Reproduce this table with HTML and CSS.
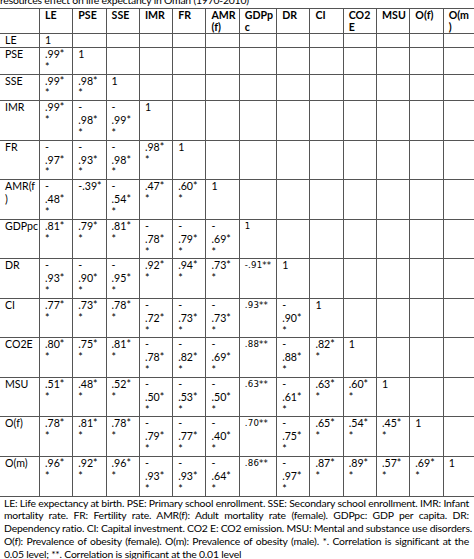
FILE: index.html
```html
<!DOCTYPE html>
<html>
<head>
<meta charset="utf-8">
<link rel="stylesheet" href="styles.css">
</head>
<body>
<div class="page">
  <div class="title">resources effect on life expectancy in Oman (1970-2010)</div>
  <table class="corr">
    <colgroup>
      <col class="c-lab"><col class="c-n"><col class="c-n"><col class="c-n"><col class="c-n"><col class="c-n"><col class="c-n"><col class="c-g"><col class="c-n"><col class="c-n"><col class="c-n"><col class="c-n"><col class="c-n"><col class="c-n">
    </colgroup>
    <tr class="head">
      <th></th><th>LE</th><th>PSE</th><th>SSE</th><th>IMR</th><th>FR</th><th>AMR<br>(f)</th><th>GDPp<br>c</th><th>DR</th><th>CI</th><th>CO2<br>E</th><th>MSU</th><th>O(f)</th><th>O(m<br>)</th>
    </tr>
    <tr><td>LE</td><td>1</td><td></td><td></td><td></td><td></td><td></td><td></td><td></td><td></td><td></td><td></td><td></td><td></td></tr>
    <tr><td>PSE</td><td>.99*<br>*</td><td>1</td><td></td><td></td><td></td><td></td><td></td><td></td><td></td><td></td><td></td><td></td><td></td></tr>
    <tr><td>SSE</td><td>.99*<br>*</td><td>.98*<br>*</td><td>1</td><td></td><td></td><td></td><td></td><td></td><td></td><td></td><td></td><td></td><td></td></tr>
    <tr><td>IMR</td><td>.99*<br>*</td><td>-<br>.98*<br>*</td><td>-<br>.99*<br>*</td><td>1</td><td></td><td></td><td></td><td></td><td></td><td></td><td></td><td></td><td></td></tr>
    <tr><td>FR</td><td>-<br>.97*<br>*</td><td>-<br>.93*<br>*</td><td>-<br>.98*<br>*</td><td>.98*<br>*</td><td>1</td><td></td><td></td><td></td><td></td><td></td><td></td><td></td><td></td></tr>
    <tr><td>AMR(f<br>)</td><td>-<br>.48*<br>*</td><td>-.39*</td><td>-<br>.54*<br>*</td><td>.47*<br>*</td><td>.60*<br>*</td><td>1</td><td></td><td></td><td></td><td></td><td></td><td></td><td></td></tr>
    <tr><td>GDPpc</td><td>.81*<br>*</td><td>.79*<br>*</td><td>.81*<br>*</td><td>-<br>.78*<br>*</td><td>-<br>.79*<br>*</td><td>-<br>.69*<br>*</td><td class="v">1</td><td></td><td></td><td></td><td></td><td></td><td></td></tr>
    <tr><td>DR</td><td>-<br>.93*<br>*</td><td>-<br>.90*<br>*</td><td>-<br>.95*<br>*</td><td>.92*<br>*</td><td>.94*<br>*</td><td>.73*<br>*</td><td class="v">-.91**</td><td>1</td><td></td><td></td><td></td><td></td><td></td></tr>
    <tr><td>CI</td><td>.77*<br>*</td><td>.73*<br>*</td><td>.78*<br>*</td><td>-<br>.72*<br>*</td><td>-<br>.73*<br>*</td><td>-<br>.73*<br>*</td><td class="v">.93**</td><td>-<br>.90*<br>*</td><td>1</td><td></td><td></td><td></td><td></td></tr>
    <tr><td>CO2E</td><td>.80*<br>*</td><td>.75*<br>*</td><td>.81*<br>*</td><td>-<br>.78*<br>*</td><td>-<br>.82*<br>*</td><td>-<br>.69*<br>*</td><td class="v">.88**</td><td>-<br>.88*<br>*</td><td>.82*<br>*</td><td>1</td><td></td><td></td><td></td></tr>
    <tr><td>MSU</td><td>.51*<br>*</td><td>.48*<br>*</td><td>.52*<br>*</td><td>-<br>.50*<br>*</td><td>-<br>.53*<br>*</td><td>-<br>.50*<br>*</td><td class="v">.63**</td><td>-<br>.61*<br>*</td><td>.63*<br>*</td><td>.60*<br>*</td><td>1</td><td></td><td></td></tr>
    <tr><td>O(f)</td><td>.78*<br>*</td><td>.81*<br>*</td><td>.78*<br>*</td><td>-<br>.79*<br>*</td><td>-<br>.77*<br>*</td><td>-<br>.40*<br>*</td><td class="v">.70**</td><td>-<br>.75*<br>*</td><td>.65*<br>*</td><td>.54*<br>*</td><td>.45*<br>*</td><td>1</td><td></td></tr>
    <tr><td>O(m)</td><td>.96*<br>*</td><td>.92*<br>*</td><td>.96*<br>*</td><td>-<br>.93*<br>*</td><td>-<br>.93*<br>*</td><td>-<br>.64*<br>*</td><td class="v">.86**</td><td>-<br>.97*<br>*</td><td>.87*<br>*</td><td>.89*<br>*</td><td>.57*<br>*</td><td>.69*<br>*</td><td>1</td></tr>
  </table>
  <div class="note">
    <span class="ln">LE: Life expectancy at birth. PSE: Primary school enrollment. SSE: Secondary school enrollment. IMR: Infant</span>
    <span class="ln">mortality rate. FR: Fertility rate. AMR(f): Adult mortality rate (female). GDPpc: GDP per capita. DR:</span>
    <span class="ln">Dependency ratio. CI: Capital investment. CO2 E: CO2 emission. MSU: Mental and substance use disorders.</span>
    <span class="ln">O(f): Prevalence of obesity (female). O(m): Prevalence of obesity (male). *. Correlation is significant at the</span>
    <span class="ln last">0.05 level; **. Correlation is significant at the 0.01 level</span>
  </div>
</div>
</body>
</html>
```
FILE: styles.css
```css
html, body {
  margin: 0;
  padding: 0;
  background: #fff;
  overflow: hidden;
}
.page {
  width: 474px;
  height: 559px;
  overflow: hidden;
  font-family: Lato, "Open Sans", sans-serif;
  color: #000;
  font-size: 10.6px;
}
.title {
  font-size: 10.4px;
  letter-spacing: -0.2px;
  line-height: 12px;
  margin-top: -6px;
  height: 14px;
  white-space: nowrap;
}
.corr {
  border-collapse: collapse;
  table-layout: fixed;
  width: 477px;
  margin-left: -1px;
}
.c-lab { width: 40px; }
.c-n { width: 33.3px; }
.c-g { width: 37.4px; }
.corr td, .corr th {
  border: 1px solid #555;
  padding: 0 0 0 5px;
  vertical-align: top;
  text-align: left;
  line-height: 12.85px;
  overflow: hidden;
  white-space: nowrap;
}
.corr th {
  font-weight: 700;
  line-height: 11.5px;
  padding-top: 1px;
}
.corr tr.head { height: 24px; }
.corr td.v {
  font-family: "DejaVu Sans", Verdana, sans-serif;
  font-size: 8.6px;
  letter-spacing: 0.2px;
}
.note {
  padding: 0 5px 0 4px;
  font-size: 10.4px;
  line-height: 12.8px;
  letter-spacing: -0.2px;
}
.ln {
  display: block;
  white-space: nowrap;
  text-align: justify;
  text-align-last: justify;
}
.ln.last {
  text-align-last: left;
}
```
